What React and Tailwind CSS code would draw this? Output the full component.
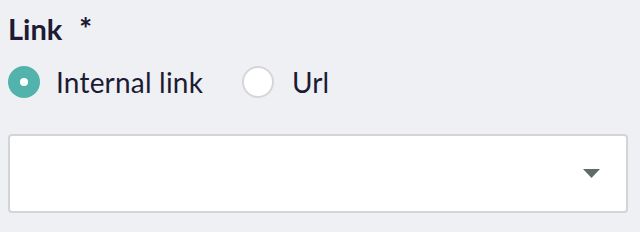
import React, { useState } from "react";

const App = () => {
  const [kind, setKind] = useState("internal");
  return (
    <div className="w-[640px] h-[232px] bg-[#eff0f4] pl-2 pr-3 pt-[10px] font-['Lato',sans-serif] text-[#1c1b33]">
      <div className="flex items-center h-[36px] text-[29px] font-bold leading-none">
        <span>Link</span>
        <span className="ml-[17px] text-[30px] font-black">*</span>
      </div>
      <div className="flex items-center mt-[19px] h-[34px]">
        <button
          className="flex items-center gap-[16px]"
          onClick={() => setKind("internal")}
        >
          {kind === "internal" ? (
            <span className="w-[32px] h-[32px] rounded-full bg-[#52b2ac] flex items-center justify-center">
              <span className="w-[8px] h-[8px] rounded-full bg-white"></span>
            </span>
          ) : (
            <span className="w-[32px] h-[32px] rounded-full bg-white border-2 border-[#d6d6d6]"></span>
          )}
          <span className="text-[28px] leading-none tracking-[0.2px]">Internal link</span>
        </button>
        <button
          className="flex items-center gap-[18px] ml-[39px]"
          onClick={() => setKind("url")}
        >
          {kind === "url" ? (
            <span className="w-[32px] h-[32px] rounded-full bg-[#52b2ac] flex items-center justify-center">
              <span className="w-[8px] h-[8px] rounded-full bg-white"></span>
            </span>
          ) : (
            <span className="w-[32px] h-[32px] rounded-full bg-white border-2 border-[#d6d6d6]"></span>
          )}
          <span className="text-[28px] leading-none">Url</span>
        </button>
      </div>
      <div className="mt-[35px] h-[79px] w-[620px] bg-white border-2 border-[#d4d4d4] rounded-[4px] flex items-center justify-end pr-[26px]">
        <svg width="17" height="9" viewBox="0 0 17 9">
          <path d="M0 0 L17 0 L8.5 9 Z" fill="#5f6b6b" />
        </svg>
      </div>
    </div>
  );
};

export default App;
